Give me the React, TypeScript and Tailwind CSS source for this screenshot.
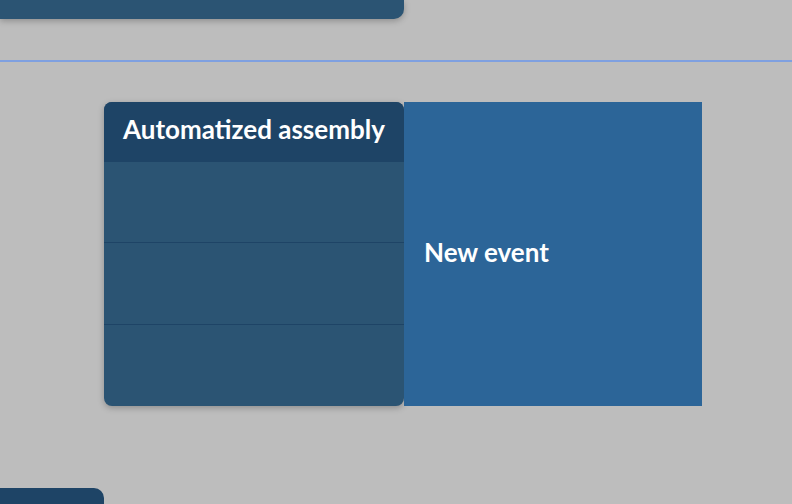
export default function App() {
  return (
    <div
      className="w-[792px] h-[504px] overflow-hidden bg-[#bdbdbd] flex flex-col"
      style={{ fontFamily: 'Lato, "Noto Sans", sans-serif' }}
    >
      {/* card above, cut off by the top edge */}
      <div className="w-[404px] h-[19px] shrink-0 bg-[#2b5473] rounded-br-[10px] shadow-[0_2px_6px_rgba(0,0,0,0.25)]" />

      {/* horizontal guide line */}
      <div className="mt-[41px] h-[2px] shrink-0 bg-[#7fa0e0]" />

      {/* resource column + event */}
      <div className="mt-[40px] ml-[104px] flex shrink-0">
        <div className="w-[300px] h-[304px] rounded-lg overflow-hidden flex flex-col bg-[#2b5473] shadow-[0_2px_6px_rgba(0,0,0,0.25)]">
          <div className="h-[60px] shrink-0 bg-[#1e4466] flex items-center justify-center">
            <span className="text-white text-[26px] font-bold leading-none pb-[6px]">Automatized assembly</span>
          </div>
          <div className="h-[81px] shrink-0 border-b border-[#1e4466]" />
          <div className="h-[82px] shrink-0 border-b border-[#1e4466]" />
          <div className="flex-1" />
        </div>
        <div className="w-[298px] h-[304px] bg-[#2c6598] flex items-center pl-[20px] pb-[4px]">
          <span className="text-white text-[26px] font-bold leading-none">New event</span>
        </div>
      </div>

      {/* card below, cut off by the bottom edge */}
      <div className="mt-[82px] w-[104px] h-[20px] shrink-0 bg-[#1e4466] rounded-tr-[10px]" />
    </div>
  )
}
